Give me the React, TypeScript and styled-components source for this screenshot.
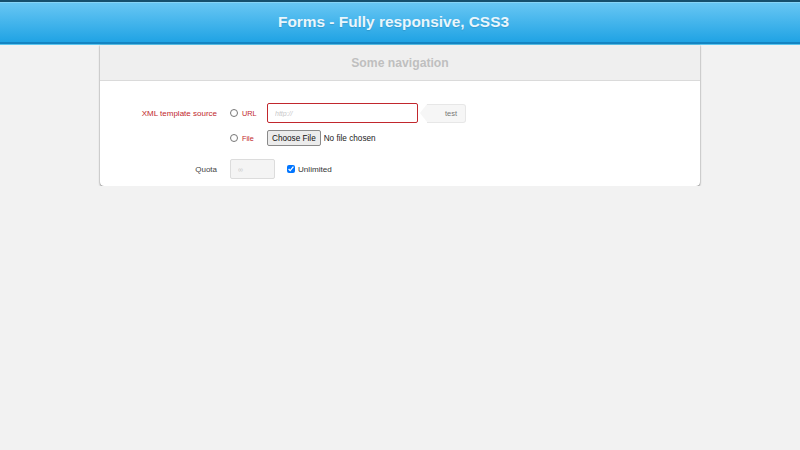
import React from "react";
import styled, { createGlobalStyle } from "styled-components";

const Global = createGlobalStyle`
  html, body {
    margin: 0;
    padding: 0;
    background: #f2f2f2;
    font-family: "Liberation Sans", Arial, sans-serif;
  }
`;

const Header = styled.header`
  height: 40px;
  padding-right: 13px;
  border-top: 2px solid #154f6d;
  border-bottom: 2px solid #1484c2;
  box-shadow: inset 0 1px 0 #86d4f7, 0 1px 0 #5cc6ef;
  background: linear-gradient(#69c7f4, #20a3e4);
  display: flex;
  align-items: center;
  justify-content: center;
`;

const Title = styled.h1`
  margin: 0;
  font-size: 15.4px;
  font-weight: bold;
  color: #eaf6fc;
  text-shadow: 0 1px 1px rgba(0, 0, 0, 0.12);
`;

const Panel = styled.main`
  width: 600px;
  margin: 1px auto 0;
  background: #fff;
  border-radius: 0 0 4px 4px;
  box-shadow: 0 1px 2px rgba(0, 0, 0, 0.45), 0 0 1px rgba(0, 0, 0, 0.35);
`;

const Nav = styled.nav`
  height: 35px;
  background: #efefef;
  border-bottom: 1px solid #dadada;
  display: flex;
  align-items: center;
  justify-content: center;
  font-size: 12.2px;
  font-weight: bold;
  color: #bfbfbf;
`;

const Form = styled.form`
  padding: 22px 0 7px;
  display: flex;
  flex-direction: column;
`;

const Row = styled.div<{ $top?: number }>`
  display: grid;
  grid-template-columns: 117px 1fr;
  column-gap: 13px;
  align-items: center;
  margin-top: ${(p) => p.$top ?? 0}px;
`;

const Label = styled.label<{ $error?: boolean }>`
  text-align: right;
  font-size: 8px;
  color: ${(p) => (p.$error ? "#c1272d" : "#444")};
`;

const Controls = styled.div`
  display: flex;
  align-items: center;
`;

const RadioOption = styled.label`
  width: 37px;
  display: flex;
  align-items: center;
  gap: 4px;
  font-size: 7.3px;
  color: #c1272d;
`;

const Radio = styled.input`
  width: 8px;
  height: 8px;
  margin: 0;
`;

const TextInput = styled.input<{ $error?: boolean; $w: number }>`
  box-sizing: border-box;
  width: ${(p) => p.$w}px;
  height: 20px;
  margin: 0;
  padding: 0 7px;
  border: 1px solid ${(p) => (p.$error ? "#c1272d" : "#dcdcdc")};
  border-radius: 2px;
  background: ${(p) => (p.$error ? "#fff" : "#f4f4f4")};
  font-family: "Liberation Sans", Arial, sans-serif;
  font-size: 7px;
  outline: none;
  &::placeholder {
    color: #c8c8c8;
    font-style: ${(p) => (p.$error ? "italic" : "normal")};
  }
`;

const Tip = styled.span`
  position: relative;
  margin-left: 9px;
  box-sizing: border-box;
  width: 39px;
  height: 19px;
  padding: 0 8px 0 0;
  display: flex;
  align-items: center;
  justify-content: flex-end;
  background: #f6f6f6;
  border: 1px solid #e7e7e7;
  border-left: none;
  border-radius: 0 3px 3px 0;
  font-size: 7.5px;
  color: #777;
  &::before {
    content: "";
    position: absolute;
    left: -7px;
    top: -1px;
    border-style: solid;
    border-width: 9.5px 7px 9.5px 0;
    border-color: transparent #f6f6f6 transparent transparent;
  }
`;

const FileInput = styled.input`
  font-family: "Liberation Sans", Arial, sans-serif;
  font-size: 8.2px;
  color: #222;
  &::file-selector-button {
    font-family: "Liberation Sans", Arial, sans-serif;
    font-size: 8.2px;
    height: 16px;
    padding: 0 4px;
    margin-right: 3px;
    border: 1px solid #8a8a8a;
    border-radius: 2px;
    background: #ececec;
    color: #111;
  }
`;

const Check = styled.label`
  margin-left: 12px;
  display: flex;
  align-items: center;
  gap: 3px;
  font-size: 8.1px;
  color: #333;
`;

const CheckBox = styled.input`
  width: 8px;
  height: 8px;
  margin: 0;
`;

export default function App() {
  return (
    <>
      <Global />
      <Header>
        <Title>Forms - Fully responsive, CSS3</Title>
      </Header>
      <Panel>
        <Nav>Some navigation</Nav>
        <Form onSubmit={(e) => e.preventDefault()}>
          <Row>
            <Label $error>XML template source</Label>
            <Controls>
              <RadioOption>
                <Radio type="radio" name="src" />
                URL
              </RadioOption>
              <TextInput $error $w={151} placeholder="http://" />
              <Tip>test</Tip>
            </Controls>
          </Row>
          <Row $top={7}>
            <span />
            <Controls>
              <RadioOption>
                <Radio type="radio" name="src" />
                File
              </RadioOption>
              <FileInput type="file" />
            </Controls>
          </Row>
          <Row $top={13}>
            <Label>Quota</Label>
            <Controls>
              <TextInput $w={45} placeholder="∞" disabled />
              <Check>
                <CheckBox type="checkbox" defaultChecked />
                Unlimited
              </Check>
            </Controls>
          </Row>
        </Form>
      </Panel>
    </>
  );
}
